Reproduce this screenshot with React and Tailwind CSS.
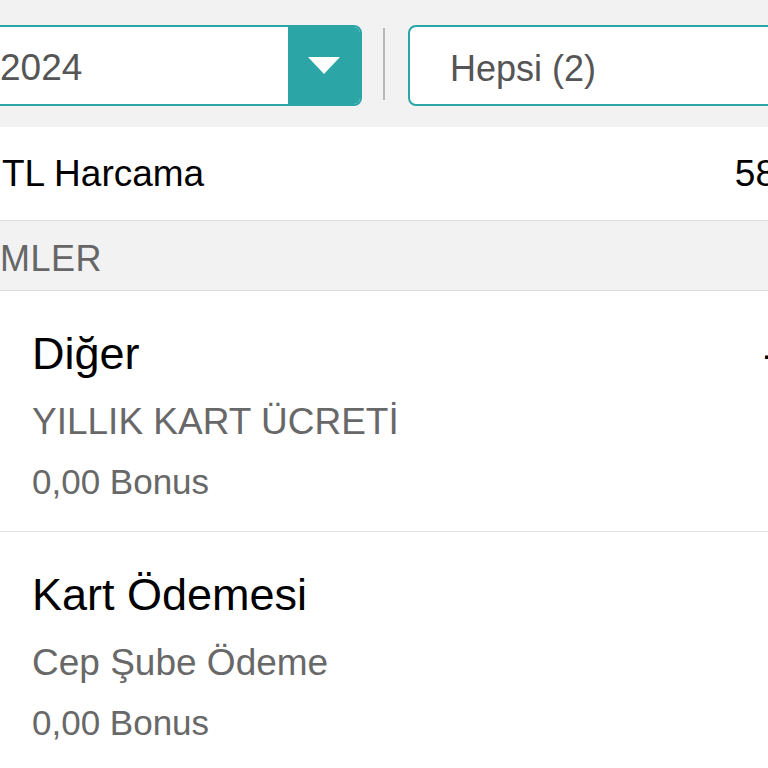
import React from "react";

const font = { fontFamily: '"Liberation Sans", Arial, sans-serif' };

function Row({ title, sub, bonus, amount }) {
  return (
    <div className="flex border-b border-[#e2e2e2] bg-white pl-[32px] pt-[36px] pb-[19px]">
      <div className="flex flex-col">
        <div className="text-[45px] leading-[54px] text-black">{title}</div>
        <div className="mt-[11px] text-[37px] leading-[60px] text-[#686868]">{sub}</div>
        <div className="text-[35px] leading-[60px] text-[#686868]">{bonus}</div>
      </div>
      {amount ? (
        <div className="ml-auto mr-[-10px] text-[45px] leading-[54px] text-black">{amount}</div>
      ) : null}
    </div>
  );
}

export default function App() {
  return (
    <div className="h-[768px] w-[768px] overflow-hidden bg-white" style={font}>
      <div className="flex h-[127px] items-start overflow-hidden bg-[#f2f2f2] pt-[25px]">
        <div className="ml-[-10px] flex h-[81px] w-[372px] shrink-0 overflow-hidden rounded-r-[8px] border-2 border-[#2ba5a6] bg-white">
          <div className="flex-1 pl-[8px] pt-[21px] text-[37px] leading-[40px] text-[#555]">2024</div>
          <div className="flex w-[72px] items-center justify-center bg-[#2ba5a6]">
            <svg width="32" height="17" viewBox="0 0 32 17">
              <polygon points="0,0 32,0 16,17" fill="#ffffff" />
            </svg>
          </div>
        </div>
        <div className="ml-[21px] mt-[3px] h-[72px] w-[2px] shrink-0 bg-[#b8b8b8]" />
        <div className="ml-[23px] h-[81px] w-[400px] shrink-0 rounded-[8px] border-2 border-[#2ba5a6] bg-white pl-[40px] pt-[22px] text-[36px] leading-[40px] text-[#555]">
          Hepsi (2)
        </div>
      </div>
      <div className="flex border-b border-[#dcdcdc] bg-white pl-[2px] pt-[27px] pb-[26px] text-[37px] leading-[40px] text-black">
        <span>TL Harcama</span>
        <span className="ml-auto mr-[-8px]">58</span>
      </div>
      <div className="border-b border-[#dcdcdc] bg-[#f2f2f2] pt-[18px] pb-[11px] text-[36px] leading-[40px] tracking-[0.5px] text-[#666]">
        MLER
      </div>
      <Row title="Diğer" sub="YILLIK KART ÜCRETİ" bonus="0,00 Bonus" amount="-" />
      <Row title="Kart Ödemesi" sub="Cep Şube Ödeme" bonus="0,00 Bonus" />
    </div>
  );
}
